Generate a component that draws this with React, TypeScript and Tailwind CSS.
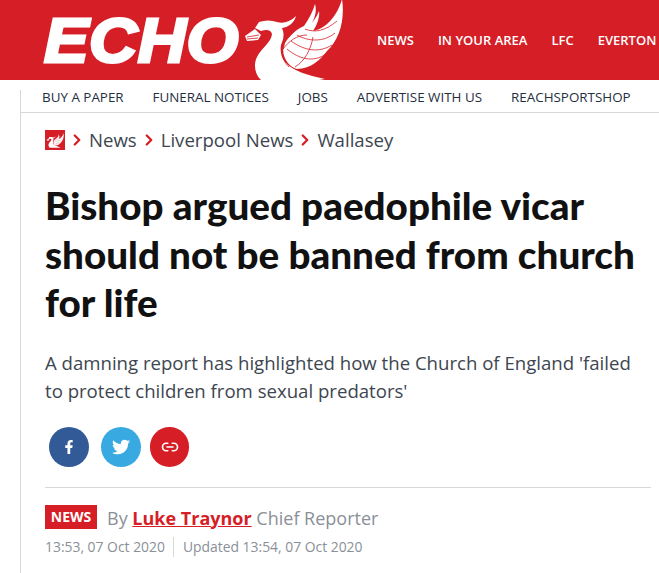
import React from 'react';
import { ChevronRight, Link2 } from 'lucide-react';
import { FaFacebookF, FaTwitter } from 'react-icons/fa';

const mainNav = ['NEWS', 'IN YOUR AREA', 'LFC', 'EVERTON'];
const subNav = ['BUY A PAPER', 'FUNERAL NOTICES', 'JOBS', 'ADVERTISE WITH US', 'REACHSPORTSHOP'];
const crumbs = ['News', 'Liverpool News', 'Wallasey'];

const Bird: React.FC<{ className?: string }> = ({ className }) => (
  <svg viewBox="0 0 115 82" className={className} fill="none">
    {/* head, neck and body */}
    <path
      d="M20 29 L24 23 C30 21 36 21 42 23 C48 25 55 23 61 17 C59 24 54 28 47 29 C50 36 48 41 46 46 C45 52 46 58 50 63 C58 72 72 76 90 80 L78 82 L27 82 C20 76 18 66 22 58 C27 48 36 44 37 35 C36 31 32 30 26 32 Z"
      fill="white"
    />
    {/* scroll in beak */}
    <path d="M10 37 L20 30 L26 36 L23 41 L12 42 Z" fill="white" />
    <path d="M12 38 L24 36 M12 40 L23 39" stroke="#d51e26" strokeWidth="0.8" />
    {/* wing */}
    <path
      d="M50 44 C55 36 62 30 69 27 C74 20 78 12 80 5 C82 12 80 18 77 24 C80 20 83 15 84 12 C85 18 82 26 78 32 C90 30 102 18 107 0 C110 20 105 40 92 52 C86 60 76 70 62 70 C54 68 49 60 48 52 Z"
      fill="white"
    />
    <path
      d="M48 50 C54 42 62 36 72 36 M62 36 C72 42 88 44 100 34 M56 42 C70 52 84 54 97 46 M52 50 C64 60 78 64 91 55 M70 30 C80 34 90 32 102 22 M78 38 C76 50 70 62 60 68 M48 52 C46 58 50 64 54 68"
      stroke="#d51e26"
      strokeWidth="0.8"
    />
  </svg>
);

export default function App() {
  return (
    <div className="flex h-[573px] w-[659px] flex-col overflow-hidden bg-white font-['Open_Sans',sans-serif]">
      {/* Red header */}
      <header className="flex h-20 shrink-0 items-center overflow-hidden bg-[#d51e26] pl-11">
        <span className="w-[198px] shrink-0 origin-left scale-x-[1.06] font-['Liberation_Sans',sans-serif] text-[63px] font-bold italic leading-none tracking-[0.5px] text-white [-webkit-text-stroke:3px_white]">
          ECHO
        </span>
        <Bird className="ml-[-7px] h-[82px] w-[115px] shrink-0" />
        <nav className="ml-[27px] flex shrink-0 gap-6 pt-[2px] text-[13px] font-semibold whitespace-nowrap text-white">
          {mainNav.map((item) => (
            <span key={item}>{item}</span>
          ))}
        </nav>
      </header>

      {/* Secondary nav */}
      <div className="ml-5 mt-[10px] flex h-[23px] shrink-0 items-center gap-[29px] border-b border-l border-[#d8d8d8] pb-[8px] pl-[21px] text-[13.4px] whitespace-nowrap text-[#1f2f3f]">
        {subNav.map((item) => (
          <span key={item}>{item}</span>
        ))}
      </div>

      <main className="ml-5 flex-1 border-l border-[#d8d8d8] pl-6 pr-2">
        {/* Breadcrumbs */}
        <div className="flex items-center pt-[14px] text-[18.6px] leading-[26px] text-[#3d4650]">
          <span className="flex h-5 w-5 items-center justify-center bg-[#d51e26]">
            <Bird className="h-[15px] w-5" />
          </span>
          {crumbs.map((crumb) => (
            <React.Fragment key={crumb}>
              <ChevronRight className="mx-[3px] h-[18px] w-[18px] text-[#d51e26]" strokeWidth={3} />
              <span>{crumb}</span>
            </React.Fragment>
          ))}
        </div>

        {/* Headline */}
        <h1 className="mt-7 font-['Lato',sans-serif] text-[38.6px] leading-[48.5px] font-black text-[#111]">
          Bishop argued paedophile vicar should not be banned from church for life
        </h1>

        <p className="mt-[22px] text-[18.6px] leading-[28px] text-[#3d4650]">
          A damning report has highlighted how the Church of England 'failed to protect children from sexual predators'
        </p>

        {/* Share buttons */}
        <div className="mt-[22px] flex items-center gap-3 pl-1">
          <span className="flex h-10 w-10 items-center justify-center rounded-full bg-[#315a96] text-white">
            <FaFacebookF className="h-[14px] w-[14px]" />
          </span>
          <span className="flex h-10 w-10 items-center justify-center rounded-full bg-[#38a9e1] text-white">
            <FaTwitter className="h-[18px] w-[18px]" />
          </span>
          <span className="ml-[-3px] flex h-10 w-[39px] items-center justify-center rounded-full bg-[#d51e26] text-white">
            <Link2 className="h-[18px] w-[18px]" strokeWidth={2.2} />
          </span>
        </div>

        {/* Byline */}
        <div className="mt-5 border-t border-[#d8d8d8] pt-[14px]">
          <div className="flex items-center">
            <span className="flex h-6 w-[52px] items-center justify-center bg-[#d51e26] text-[14px] font-bold text-white">
              NEWS
            </span>
            <span className="ml-[10px] pt-[2px] text-lg leading-7 text-[#8a9097]">
              By <a className="font-bold text-[#d51e26] underline">Luke Traynor</a> Chief Reporter
            </span>
          </div>
          <div className="mt-[5px] flex items-center text-[13.9px] leading-[20px] text-[#8a9097]">
            <span className="border-r border-[#d8d8d8] pr-2">13:53, 07 Oct 2020</span>
            <span className="pl-[9px]">Updated 13:54, 07 Oct 2020</span>
          </div>
        </div>
      </main>
    </div>
  );
}
